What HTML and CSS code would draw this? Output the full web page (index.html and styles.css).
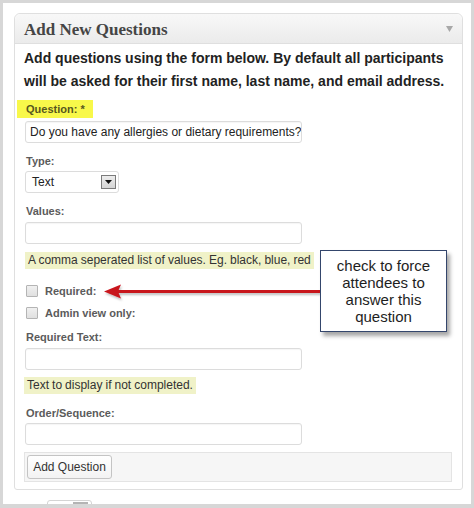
FILE: index.html
```html
<!DOCTYPE html>
<html>
<head>
<meta charset="utf-8">
<link rel="stylesheet" href="styles.css">
</head>
<body>
<div class="frame">
  <div class="panel">
    <div class="panel-head">
      <h3 class="panel-title">Add New Questions</h3>
      <svg class="toggle" width="7" height="6" viewBox="0 0 7 6"><path d="M0 0H7L3.5 6Z" fill="#a8a8a8"/></svg>
    </div>
    <div class="panel-body">
      <p class="intro">Add questions using the form below. By default all participants will be asked for their first name, last name, and email address.</p>
      <div class="label label-hl">Question: *</div>
      <div class="input"><span class="input-text">Do you have any allergies or dietary requirements?</span></div>
      <div class="label label-gap">Type:</div>
      <div class="select"><span class="input-text">Text</span><span class="select-btn"><svg width="7" height="4" viewBox="0 0 7 4"><path d="M0 0H7L3.5 4Z" fill="#111"/></svg></span></div>
      <div class="label label-gap">Values:</div>
      <div class="input input-gap"></div>
      <div class="hint hint-1">A comma seperated list of values. Eg. black, blue, red</div>
      <div class="check-row check-first"><span class="checkbox"></span><span class="check-label">Required:</span></div>
      <div class="check-row check-second"><span class="checkbox"></span><span class="check-label">Admin view only:</span></div>
      <div class="label label-gap2">Required Text:</div>
      <div class="input input-gap"></div>
      <div class="hint hint-2">Text to display if not completed.</div>
      <div class="label label-gap3">Order/Sequence:</div>
      <div class="input"></div>
      <div class="actions"><button class="btn">Add Question</button></div>
    </div>
  </div>
  <div class="mini-select"><span class="mini-btn"></span></div>

  <svg class="arrow" width="230" height="20" viewBox="0 0 230 20">
    <defs>
      <filter id="sh" x="-5%" y="-50%" width="110%" height="200%">
        <feDropShadow dx="1" dy="2" stdDeviation="1" flood-color="#000" flood-opacity="0.25"/>
      </filter>
    </defs>
    <g filter="url(#sh)">
      <path d="M1 8.5 L18 1.5 L15 8.5 L18 15.5 Z" fill="#c8161d"/>
      <rect x="15" y="7" width="205" height="3" fill="#c8161d"/>
    </g>
  </svg>
  <div class="callout">check to force attendees to answer this question</div>
</div>
</body>
</html>
```

FILE: styles.css
```css
html, body {
  margin: 0;
  padding: 0;
}
body {
  background: #d7d7d7;
  width: 474px;
  height: 508px;
  overflow: hidden;
  font-family: "Liberation Sans", Arial, sans-serif;
}
.frame {
  position: relative;
  margin: 3px 3px 0 3px;
  height: 501px;
  background: #fff;
  padding: 10px 8px 0 11px;
  box-sizing: border-box;
  overflow: hidden;
}
.panel {
  width: 449px;
  border: 1px solid #dfdfdf;
  border-radius: 6px 6px 3px 3px;
  box-sizing: border-box;
  background: #fff;
}
.panel-head {
  height: 29px;
  display: flex;
  align-items: center;
  justify-content: space-between;
  padding: 0 9px 0 9px;
  background: linear-gradient(#f8f8f8, #ebebeb);
  border-bottom: 1px solid #dfdfdf;
  border-radius: 6px 6px 0 0;
}
.panel-title {
  margin: 0;
  font-family: "Liberation Serif", Georgia, serif;
  font-weight: bold;
  font-size: 17px;
  color: #454545;
  padding-top: 2px;
}
.toggle {
  margin-top: 1px;
}
.panel-body {
  padding: 3px 10px 7px 9px;
}
.intro {
  margin: 0;
  font-size: 14px;
  font-weight: bold;
  line-height: 23px;
  color: #222;
}
.label {
  font-size: 11px;
  font-weight: bold;
  color: #5b5b5b;
  line-height: 14px;
  padding-left: 2px;
}
.label-hl {
  width: fit-content;
  margin-top: 7px;
  margin-left: -7px;
  padding: 2px 8px 2px 9px;
  background: #f8f84a;
  color: #56561e;
}
.label-gap { margin-top: 11px; }
.label-gap2 { margin-top: 10px; }
.label-gap3 { margin-top: 12px; }
.input {
  width: 277px;
  height: 22px;
  box-sizing: border-box;
  margin: 3px 0 0 1px;
  border: 1px solid #dcdcdc;
  border-radius: 3px;
  background: #fff;
  box-shadow: inset 0 1px 1px rgba(0,0,0,0.04);
  display: flex;
  align-items: center;
  padding-left: 4px;
  overflow: hidden;
}
.input-gap { margin-top: 4px; }
.input-text {
  font-size: 12px;
  color: #222;
  white-space: nowrap;
}
.select {
  width: 94px;
  height: 22px;
  box-sizing: border-box;
  margin: 3px 0 0 1px;
  border: 1px solid #dcdcdc;
  border-radius: 3px;
  display: flex;
  align-items: center;
  justify-content: space-between;
  padding: 0 2px 0 6px;
}
.select-btn {
  width: 15px;
  height: 14px;
  box-sizing: border-box;
  border: 1px solid #7a7a7a;
  background: linear-gradient(#ececec, #d4d4d4);
  display: flex;
  align-items: center;
  justify-content: center;
}
.hint {
  width: fit-content;
  margin-top: 8px;
  height: 17px;
  line-height: 17px;
  font-size: 12px;
  color: #333;
  background: #f0f2c8;
  padding: 0 3px 0 3px;
  word-spacing: -0.3px;
  white-space: nowrap;
}
.hint-1 { margin-left: 1px; }
.hint-2 { margin-top: 7px; }
.check-row {
  display: flex;
  align-items: center;
  height: 14px;
  padding-left: 2px;
}
.check-first { margin-top: 15px; }
.check-second { margin-top: 8px; }
.checkbox {
  width: 12px;
  height: 12px;
  box-sizing: border-box;
  border: 1px solid #b4b4b4;
  background: linear-gradient(#f0f0f0, #e0e0e0);
  border-radius: 1px;
}
.check-label {
  margin-left: 7px;
  font-size: 11px;
  font-weight: bold;
  color: #5b5b5b;
}
.actions {
  margin-top: 7px;
  height: 30px;
  box-sizing: border-box;
  border: 1px solid #e4e4e4;
  background: #f6f6f6;
  padding: 2px 0 0 2px;
}
.btn {
  display: block;
  width: 85px;
  height: 24px;
  padding: 0;
  border: 1px solid #c4c4c4;
  border-radius: 3px;
  background: linear-gradient(#ffffff, #f3f3f3);
  font-family: "Liberation Sans", Arial, sans-serif;
  font-size: 12px;
  color: #333;
}
.mini-select {
  margin: 10px 0 0 33px;
  width: 45px;
  height: 20px;
  box-sizing: border-box;
  border: 1px solid #d4d4d4;
  border-radius: 3px;
  background: #fff;
  display: flex;
  justify-content: flex-end;
  padding: 1px 3px 0 0;
}
.mini-btn {
  width: 15px;
  height: 14px;
  background: #b4b4b4;
}
.arrow {
  position: absolute;
  left: 100px;
  top: 280px;
}
.callout {
  position: absolute;
  left: 317px;
  top: 247px;
  width: 127px;
  height: 82px;
  box-sizing: border-box;
  border: 1.5px solid #34466c;
  background: #fff;
  box-shadow: 3px 4px 4px rgba(0,0,0,0.35);
  display: flex;
  align-items: center;
  justify-content: center;
  text-align: center;
  font-size: 15px;
  line-height: 17px;
  color: #1e1e1e;
  padding: 0 10px;
}
```
